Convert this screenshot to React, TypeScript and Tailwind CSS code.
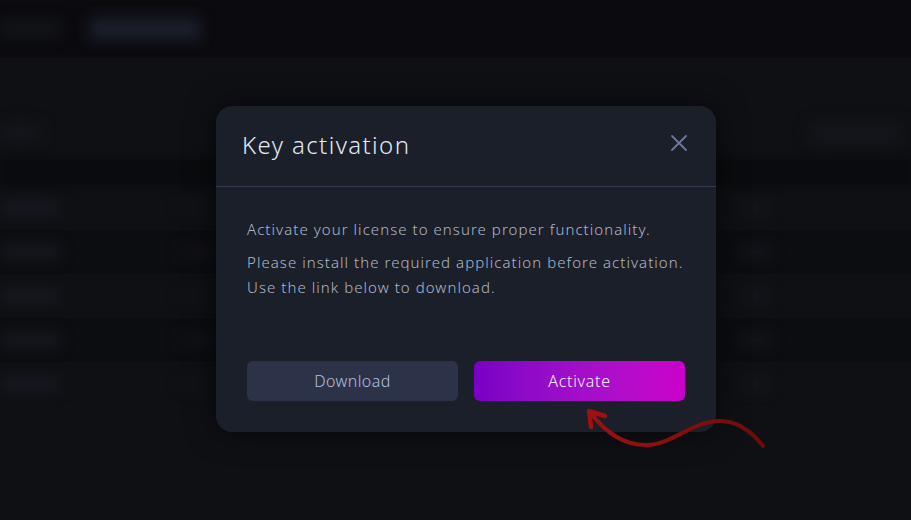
import React from "react";

const font = { fontFamily: '"Noto Sans", "DejaVu Sans", sans-serif' };

function BgRow({ top }: { top: string }) {
  return (
    <div className={`flex items-center justify-between h-[44px] ${top}`}>
      <div className="flex items-center gap-[120px] pl-0">
        <div className="w-[60px] h-[14px] rounded bg-[#171921] blur-[7px]" />
        <div className="w-[40px] h-[10px] rounded bg-[#121318] blur-[7px]" />
      </div>
      <div className="flex items-center gap-[80px] pr-[140px]">
        <div className="w-[30px] h-[12px] rounded bg-[#14161c] blur-[7px]" />
      </div>
    </div>
  );
}

export default function App() {
  return (
    <div className="relative w-[911px] h-[520px] overflow-hidden bg-[#0f1014]" style={font}>
      {/* Blurred background page */}
      <div className="flex flex-col">
        <div className="h-[58px] bg-[#0b0b0f] flex items-center gap-[30px] pl-0">
          <div className="w-[60px] h-[16px] rounded bg-[#13151a] blur-[7px]" />
          <div className="w-[110px] h-[22px] rounded bg-[#1b1f2c] blur-[7px]" />
        </div>
        <div className="h-[50px]" />
        <div className="h-[50px] flex items-center justify-between">
          <div className="w-[40px] h-[14px] rounded bg-[#16181f] blur-[8px]" />
          <div className="w-[90px] h-[18px] rounded bg-[#15171d] blur-[8px] mr-[10px]" />
        </div>
        <div className="h-[28px] bg-[#0a0b0e] blur-[4px]" />
        <BgRow top="" />
        <BgRow top="bg-[#0c0d11]" />
        <BgRow top="" />
        <BgRow top="bg-[#0c0d11]" />
        <BgRow top="" />
      </div>

      {/* Modal overlay */}
      <div className="absolute left-[216px] top-[106px] w-[500px] h-[326px] rounded-[16px] bg-[#1b1f2a] shadow-[0_0_30px_rgba(0,0,0,0.6)] flex flex-col">
        <div className="h-[81px] flex items-center justify-between pl-[26px] pr-[28px] border-b border-[#343a50]">
          <div className="text-[24px] font-light text-[#e2e9f7] tracking-[1.4px] leading-none -mt-[2px]">Key activation</div>
          <svg width="18" height="18" viewBox="0 0 18 18" className="-mt-[6px]">
            <path d="M2 2 L16 16 M16 2 L2 16" stroke="#6d789d" strokeWidth="1.8" strokeLinecap="round" />
          </svg>
        </div>
        <div className="flex-1 flex flex-col px-[31px] pt-[30px] pb-[31px]">
          <div className="text-[15px] text-[#b1b7c9] leading-[25px] font-light tracking-[1.05px]">
            <p>Activate your license to ensure proper functionality.</p>
            <p className="mt-[8px]">Please install the required application before activation.</p>
            <p>Use the link below to download.</p>
          </div>
          <div className="flex-1" />
          <div className="flex gap-[16px]">
            <button className="flex-1 h-[40px] rounded-[6px] bg-[#2c3349] text-[#b3bfdf] text-[16px] font-light tracking-[0.4px]">
              Download
            </button>
            <button className="flex-1 h-[40px] rounded-[6px] bg-gradient-to-r from-[#7a00c6] to-[#cb00cb] text-[#f6eeff] text-[16px] font-light tracking-[0.7px]">
              Activate
            </button>
          </div>
        </div>
      </div>

      {/* Arrow annotation */}
      <svg className="absolute left-0 top-0" width="911" height="520" viewBox="0 0 911 520">
        <defs>
          <linearGradient id="ar" x1="589" y1="0" x2="765" y2="0" gradientUnits="userSpaceOnUse">
            <stop offset="0" stopColor="#a01010" />
            <stop offset="1" stopColor="#6a0c0c" />
          </linearGradient>
        </defs>
        <path
          d="M590 412 C 605 432, 625 446, 648 445 C 672 444, 692 422, 718 421 C 738 420, 752 432, 763 446"
          fill="none"
          stroke="url(#ar)"
          strokeWidth="4"
          strokeLinecap="round"
        />
        <path d="M591 427 L589 411 L605 416" fill="none" stroke="#a01010" strokeWidth="4.5" strokeLinecap="round" strokeLinejoin="round" />
      </svg>
    </div>
  );
}
